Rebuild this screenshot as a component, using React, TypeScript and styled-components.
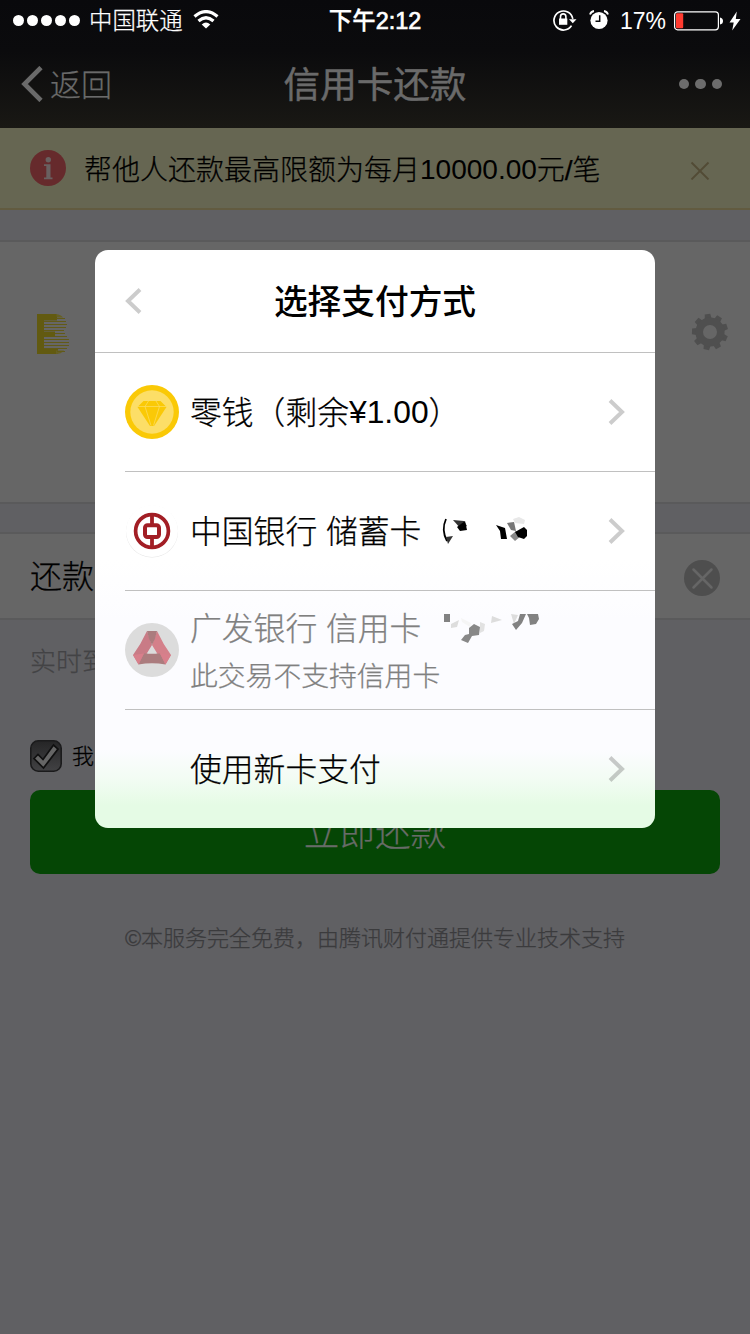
import React from "react";
import styled, { createGlobalStyle } from "styled-components";

const GlobalStyle = createGlobalStyle`
  * { box-sizing: border-box; }
  body {
    margin: 0;
    background: #606063;
    font-family: "Liberation Sans", "Noto Sans CJK SC", sans-serif;
    font-weight: 300;
  }
`;

const Screen = styled.div`
  position: relative;
  width: 750px;
  height: 1334px;
  overflow: hidden;
  display: flex;
  flex-direction: column;
  background: #606063;
  white-space: nowrap;
  -webkit-text-stroke: 0.25px currentColor;
`;

const Latin = styled.span`
  vertical-align: 1.5px;
  line-height: 1;
  -webkit-text-stroke: 0;
`;

const TopArea = styled.header`
  height: 128px;
  flex: none;
  background: linear-gradient(#09090c 0%, #0b0b0d 40%, #191814 100%);
`;

const StatusBar = styled.div`
  height: 40px;
  display: grid;
  grid-template-columns: 1fr auto 1fr;
  align-items: center;
  padding: 2px 9px 0 13px;
  color: #fff;
`;

const StatusGroup = styled.div<{ $end?: boolean }>`
  display: flex;
  align-items: center;
  justify-content: ${(p) => (p.$end ? "flex-end" : "flex-start")};
`;

const SignalDots = styled.div`
  display: flex;
  gap: 3px;
  margin: -1px 9px 0 0;
`;

const SignalDot = styled.i`
  width: 11px;
  height: 11px;
  border-radius: 50%;
  background: #fff;
`;

const Carrier = styled.span`
  font-size: 23.4px;
  line-height: 36px;
  margin-right: 10px;
`;

const WifiSlot = styled.div`
  display: flex;
  margin-top: -3px;
`;

const Clock = styled.span`
  margin-left: -4px;
  font-size: 23.4px;
  line-height: 36px;
  font-weight: 500;
`;

const ClockDigits = styled.span`
  -webkit-text-stroke: 0.7px #fff;
`;

const BatteryLevel = styled.span`
  font-size: 23px;
  line-height: 36px;
  margin: 0 8px 0 11px;
  width: 46px;
  -webkit-text-stroke: 0;
`;

const NavBar = styled.nav`
  height: 88px;
  display: grid;
  grid-template-columns: 1fr auto 1fr;
  align-items: center;
  padding: 0 28px 0 21px;
  color: #6a6a6a;
`;

const BackButton = styled.div`
  display: flex;
  align-items: center;
  gap: 7px;
  font-size: 31px;
  line-height: 44px;
`;

const BackLabel = styled.span`
  padding-top: 4px;
`;

const NavTitle = styled.h1`
  margin: 0 0 0 7px;
  padding-top: 4px;
  font-size: 36.6px;
  line-height: 44px;
  font-weight: 400;
  -webkit-text-stroke: 0.5px #6a6a6a;
`;

const MoreButton = styled.div`
  display: flex;
  justify-content: flex-end;
  gap: 6px;
`;

const MoreDot = styled.i`
  width: 10.5px;
  height: 10.5px;
  border-radius: 50%;
  background: #6c6c6c;
`;

const Banner = styled.div`
  height: 82px;
  flex: none;
  display: flex;
  align-items: center;
  padding: 0 40px 0 30px;
  background: #666652;
  border-bottom: 2px solid #625b40;
  color: #000;
  font-size: 28px;
`;

const BannerText = styled.span`
  flex: 1;
  margin-left: 18px;
`;

const Panel = styled.section<{ $height: number; $top: number }>`
  height: ${(p) => p.$height}px;
  margin-top: ${(p) => p.$top}px;
  flex: none;
  display: flex;
  justify-content: space-between;
  align-items: center;
  padding: 3px 30px 0;
  background: #666;
  border: solid #5a5a5b;
  border-width: 2px 0;
  color: #000;
  font-size: 32px;
  line-height: 44px;
`;

const PanelLabel = styled.span`
  padding-bottom: 1px;
`;

const CardPanel = styled(Panel)`
  align-items: flex-start;
  padding: 71px 21px 0 36px;
`;

const BillSlot = styled.div`
  display: flex;
  padding-top: 1px;
`;

const Hint = styled.p`
  margin: 23px 30px 0;
  height: 38px;
  line-height: 38px;
  font-size: 26px;
  color: #434345;
`;

const Agreement = styled.label`
  display: flex;
  align-items: center;
  height: 34px;
  margin: 58px 30px 0;
  font-size: 22px;
  line-height: 30px;
  gap: 10px;
  color: #000;
`;

const AgreementText = styled.span`
  padding-top: 1px;
`;

const SubmitButton = styled.div`
  height: 84px;
  flex: none;
  margin: 17px 30px 0;
  border-radius: 10px;
  background: #054605;
  color: #686b68;
  font-size: 35.6px;
  line-height: 88px;
  text-align: center;
`;

const Footer = styled.footer`
  margin-top: 48px;
  text-align: center;
  font-size: 22px;
  line-height: 34px;
  color: #3b3b3d;
`;

const Overlay = styled.div`
  position: absolute;
  inset: 0;
  padding: 250px 95px 0;
`;

const Dialog = styled.div`
  height: 578px;
  border-radius: 13px;
  overflow: hidden;
  display: flex;
  flex-direction: column;
  background: linear-gradient(#fff 0, #fff 310px, #fcfcff 370px, #fcfcff 500px, #f2fcf3 530px, #e5fbe5 555px, #e5fbe5 100%);
`;

const DialogHeader = styled.div`
  height: 103px;
  border-bottom: 1px solid #c0c0c0;
  display: grid;
  grid-template-columns: 1fr auto 1fr;
  align-items: center;
  padding: 0 30px;
`;

const DialogTitle = styled.h2`
  margin: 0;
  padding-top: 2px;
  font-size: 33.7px;
  line-height: 48px;
  font-weight: 500;
  color: #000;
  -webkit-text-stroke: 0;
`;

const MethodRow = styled.div<{ $disabled?: boolean; $last?: boolean }>`
  height: ${(p) => (p.$last ? 118 : 119)}px;
  margin-left: 30px;
  padding-right: 30px;
  border-bottom: ${(p) => (p.$last ? "none" : "1px solid #c0c0c0")};
  display: flex;
  align-items: center;
  color: ${(p) => (p.$disabled ? "#808080" : "#000")};
`;

const MethodIcon = styled.div`
  width: 65px;
  height: 54px;
  flex: none;
`;

const MethodBody = styled.div<{ $stacked?: boolean }>`
  flex: 1;
  display: flex;
  flex-direction: column;
  padding-top: ${(p) => (p.$stacked ? 5 : 1)}px;
`;

const MethodName = styled.div`
  font-size: 31.8px;
  line-height: 48px;
`;

const MethodNameWithNumber = styled(MethodName)`
  display: flex;
  align-items: center;
`;

const MethodNote = styled.div`
  font-size: 27.8px;
  line-height: 48px;
`;

const Redaction = styled.svg`
  margin: -1px 0 0 15px;
  overflow: visible;
`;

const Chevron = ({ left }: { left?: boolean }) => (
  <svg width="17" height="26" viewBox="0 0 17 26" fill="none" stroke="#000" strokeOpacity="0.2" strokeWidth="4">
    <path d={left ? "M15 1.5 3 13l12 11.5" : "M2 1.5 14 13 2 24.5"} />
  </svg>
);

const WifiIcon = () => (
  <svg width="26" height="19" viewBox="0 0 26 19" fill="none" stroke="#fff" strokeWidth="3.200">
    <path d="M1.500 6.500Q13-3.300 24.500 6.500" />
    <path d="M5.500 11Q13 4.500 20.500 11" />
    <path d="M13 18.500 8.700 14.500Q13 10.600 17.300 14.500Z" fill="#fff" stroke="none" />
  </svg>
);

const LockIcon = () => (
  <svg width="24" height="22" viewBox="0 0 24 22" fill="none" stroke="#fff">
    <path d="M18.500 16.600A9.500 9.500 0 1 1 19.800 9.800" strokeWidth="1.700" />
    <path d="M16 10.200h7.500l-3.700 4Z" fill="#fff" stroke="none" />
    <path d="M7.500 10V7.800a2.700 2.900 0 0 1 5.400 0V10" strokeWidth="1.600" />
    <path d="M6 9.500h8.300v6.300H6Z" fill="#fff" stroke="none" />
  </svg>
);

const AlarmIcon = () => (
  <svg width="20" height="20" viewBox="0 0 20 20" fill="none" stroke="#fff">
    <circle cx="10" cy="10.500" r="8.600" fill="#fff" stroke="none" />
    <path d="M1 4.500Q2 1.500 5 1M19 4.500Q18 1.500 15 1" strokeWidth="1.800" />
    <path d="M10.700 5.200v6H6.500" stroke="#0a0a0c" strokeWidth="1.500" />
  </svg>
);

const BatteryIcon = () => (
  <svg width="49" height="20" viewBox="0 0 49 20">
    <rect x=".6" y=".8" width="43.800" height="18" rx="3" fill="none" stroke="#fff" strokeWidth="1.200" />
    <rect x="2" y="2.300" width="7.200" height="15" rx="1" fill="#ff3b30" />
    <path d="M46 6.500q3 .5 3 3.500t-3 3.500Z" fill="#fff" />
  </svg>
);

const BoltIcon = () => (
  <svg width="12" height="20" viewBox="0 0 12 20">
    <path d="M7.800.5.5 11.500h4.200L3.200 19.500 11.500 8H6.800Z" fill="#fff" />
  </svg>
);

const StatusIcons = styled.div`
  display: flex;
  align-items: center;
  gap: 12px;
  margin-top: -2px;
`;

const PowerIcons = styled.div`
  display: flex;
  align-items: center;
  gap: 6px;
  margin-top: -1px;
`;

const InfoIcon = () => (
  <svg width="36" height="36" viewBox="0 0 36 36">
    <circle cx="18" cy="18" r="18" fill="#662a2c" />
    <circle cx="18.300" cy="9.700" r="2.700" fill="#696060" />
    <path d="M14 14.300h6.500v13.200h2v1.700h-8.500v-1.700h2.300V16H14Z" fill="#696060" />
  </svg>
);

const GearIcon = () => (
  <svg width="38" height="38" viewBox="-19 -19 38 38">
    <g fill="#4f4f4f">
      {Array.from({ length: 9 }, (_, i) => (
        <path key={i} d="M-3.800-10-2.800-18h5.600L3.800-10Z" transform={`rotate(${i * 40 - 8})`} />
      ))}
    </g>
    <circle r="10.800" fill="none" stroke="#4f4f4f" strokeWidth="7.600" />
  </svg>
);

const BillLogo = () => (
  <svg width="34" height="40" viewBox="0 0 34 40" fill="#625a10">
    <path d="M1 0h20v6.500H8v11h11v5.500H8v12h14v5H1Z" />
    <path d="M20 0q5 .5 7 3.500h-6ZM20 36.500h8q-3 3.500-8 3.500Z" fill="#666024" />
    <path d="M8 7.500h22M8 10.500h23M8 13.500h22M8 16.500h20M19 19.500h10M19 22.500h12M8 25.500h25M8 28.500h25M8 31.500h25M8 34.500h23M21 37.500h8M20 4.500h9" stroke="#625a18" strokeWidth="1.100" />
  </svg>
);

const ClearIcon = () => (
  <svg width="36" height="36" viewBox="0 0 36 36">
    <circle cx="18" cy="18" r="18" fill="#4e4e4e" />
    <path d="m9.500 9.500 18 18m0-18-18 18" stroke="#666" strokeWidth="2.500" strokeLinecap="round" />
  </svg>
);

const CheckIcon = () => (
  <svg width="32" height="32" viewBox="0 0 32 32">
    <defs>
      <linearGradient id="box" x2="0" y2="1">
        <stop stopColor="#252526" />
        <stop offset="1" stopColor="#424244" />
      </linearGradient>
    </defs>
    <rect x=".8" y=".8" width="30.400" height="30.400" rx="7.500" fill="url(#box)" stroke="#1b1b1c" strokeWidth="1.600" />
    <path d="m4 18.500 4-4 5 5L23.500 5l4.500 4-14.500 19Z" fill="#666" stroke="#101010" strokeWidth="1.700" />
  </svg>
);

const CoinIcon = () => (
  <svg width="54" height="54" viewBox="0 0 54 54">
    <circle cx="27" cy="27" r="27" fill="#fac906" />
    <circle cx="27" cy="27" r="21.700" fill="#fcde67" />
    <path d="M18.500 16h17l6 6-12.500 19h-4L12.500 22Z" fill="#fac906" />
    <path d="M12.500 21.500h29M23.500 16l-3.500 5.500 6 19m5-24.500 3.500 5.500-6 19" fill="none" stroke="#fcde67" strokeWidth=".7" />
  </svg>
);

const BankOfChinaIcon = () => (
  <svg width="54" height="54" viewBox="0 0 54 54" fill="none" stroke="#a21e25">
    <circle cx="27" cy="27.600" r="26" fill="#e2e2e2" stroke="none" />
    <circle cx="27" cy="27" r="26" fill="#fff" stroke="none" />
    <circle cx="27" cy="27" r="16.400" strokeWidth="3.700" />
    <rect x="20" y="21.300" width="14" height="11.800" rx="2.500" strokeWidth="4" />
    <path d="M27 10v10M27 34.500V44" strokeWidth="3.800" />
  </svg>
);

const GuangfaIcon = () => (
  <svg width="54" height="54" viewBox="0 0 54 54">
    <circle cx="27" cy="27" r="27" fill="#dcdcdc" />
    <path d="M22 8Q16 21 8 32l5.500 9.500Q21 33 27 22Z" fill="#c97b86" />
    <path d="M32 8q6 13 14 24l-5.500 9.500Q33 33 27 22Z" fill="#d4808a" />
    <path d="M22 8h10q-1.500 8-5 14-3.500-6-5-14Z" fill="#ab7c7e" />
    <path d="M19 30.500h16l5.500 11q-13.500-2.500-27 0Z" fill="#ab7c7e" />
    <path d="m8 32 11-1.500-5.500 11ZM46 32l-11-1.500 5.500 11Z" fill="#d87f8b" />
    <path d="M27 23.500 31.500 30.500h-9Z" fill="#dcdcdc" />
  </svg>
);

const App = () => (
  <>
    <GlobalStyle />
    <Screen>
      <TopArea>
        <StatusBar>
          <StatusGroup>
            <SignalDots>
              {[0, 1, 2, 3, 4].map((n) => (
                <SignalDot key={n} />
              ))}
            </SignalDots>
            <Carrier>中国联通</Carrier>
            <WifiSlot>
              <WifiIcon />
            </WifiSlot>
          </StatusGroup>
          <Clock>
            下午<ClockDigits>2:12</ClockDigits>
          </Clock>
          <StatusGroup $end>
            <StatusIcons>
              <LockIcon />
              <AlarmIcon />
            </StatusIcons>
            <BatteryLevel>17%</BatteryLevel>
            <PowerIcons>
              <BatteryIcon />
              <BoltIcon />
            </PowerIcons>
          </StatusGroup>
        </StatusBar>
        <NavBar>
          <BackButton>
            <svg width="22" height="36" viewBox="0 0 22 36" fill="none" stroke="#6a6a6a" strokeWidth="4.600">
              <path d="M20 1.500 3.500 18 20 34.500" />
            </svg>
            <BackLabel>返回</BackLabel>
          </BackButton>
          <NavTitle>信用卡还款</NavTitle>
          <MoreButton>
            <MoreDot />
            <MoreDot />
            <MoreDot />
          </MoreButton>
        </NavBar>
      </TopArea>

      <Banner>
        <InfoIcon />
        <BannerText>
          帮他人还款最高限额为每月<Latin>10000.00</Latin>元/笔
        </BannerText>
        <svg width="20" height="24" viewBox="0 0 20 24">
          <path d="m1.500 6.500 17 17m0-17-17 17" stroke="#524b35" strokeWidth="1.800" />
        </svg>
      </Banner>

      <CardPanel $height={264} $top={30}>
        <BillSlot>
          <BillLogo />
        </BillSlot>
        <GearIcon />
      </CardPanel>

      <Panel $height={88} $top={28}>
        <PanelLabel>还款</PanelLabel>
        <ClearIcon />
      </Panel>
      <Hint>实时到</Hint>
      <Agreement>
        <CheckIcon />
        <AgreementText>我</AgreementText>
      </Agreement>
      <SubmitButton>立即还款</SubmitButton>
      <Footer>©本服务完全免费，由腾讯财付通提供专业技术支持</Footer>

      <Overlay>
        <Dialog>
          <DialogHeader>
            <Chevron left />
            <DialogTitle>选择支付方式</DialogTitle>
          </DialogHeader>
          <MethodRow>
            <MethodIcon>
              <CoinIcon />
            </MethodIcon>
            <MethodBody>
              <MethodName>
                零钱（剩余<Latin>¥1.00</Latin>）
              </MethodName>
            </MethodBody>
            <Chevron />
          </MethodRow>
          <MethodRow>
            <MethodIcon>
              <BankOfChinaIcon />
            </MethodIcon>
            <MethodBody>
              <MethodNameWithNumber>
                中国银行 储蓄卡
                <Redaction width="100" height="30" viewBox="0 0 100 30">
                  <path d="M10 3Q5 14 11 25" fill="none" stroke="#000" strokeWidth="1.800" />
                  <path d="m10 21 7-1-5 8Z" fill="#333" />
                  <path d="m17 4 11 1 3 5-6 3Z" fill="#333" />
                  <path d="m21 11 8-6 2 9-7 1Z" />
                  <path d="m60 9 9 3 2 11h-6l-1-8Z" />
                  <path d="m71 7 7-1 2 9-5-1Z" fill="#777" />
                  <path d="m77 3 6-2 6 3-1 4-9-1Z" fill="#e8e8e8" />
                  <path d="m74 20 6-5 5 5-6 5Z" fill="#888" />
                  <path d="m79 16 9-5 3 3v6l-3 3-6-2Z" />
                </Redaction>
              </MethodNameWithNumber>
            </MethodBody>
            <Chevron />
          </MethodRow>
          <MethodRow $disabled>
            <MethodIcon>
              <GuangfaIcon />
            </MethodIcon>
            <MethodBody $stacked>
              <MethodNameWithNumber>
                广发银行 信用卡
                <Redaction width="104" height="30" viewBox="0 0 104 30">
                  <path d="M8 1h6v8H8Z" fill="#828282" />
                  <path d="m15 11 8-4-2 7-6 1Z" fill="#ddd" />
                  <path d="m25 5 10 5-1 4-8-5Z" fill="#f5f5f5" />
                  <path d="m33 15 5-4 6 3-1 8-7 1-4 7-7-3 4-5 4-1Z" fill="#888" />
                  <path d="m44 9 5 2-1 7-4 2Z" fill="#e2e2e2" />
                  <path d="m56 3 10 4-11 3Z" fill="#ddd" />
                  <path d="m75 1 7 1-4 9Z" fill="#ddd" />
                  <path d="M84 1h6l-4 9-6 7-4-6 6-3ZM91 1h11l1 5-3 5-6 1-1-7Z" fill="#828282" />
                </Redaction>
              </MethodNameWithNumber>
              <MethodNote>此交易不支持信用卡</MethodNote>
            </MethodBody>
          </MethodRow>
          <MethodRow $last>
            <MethodIcon />
            <MethodBody>
              <MethodName>使用新卡支付</MethodName>
            </MethodBody>
            <Chevron />
          </MethodRow>
        </Dialog>
      </Overlay>
    </Screen>
  </>
);

export default App;
